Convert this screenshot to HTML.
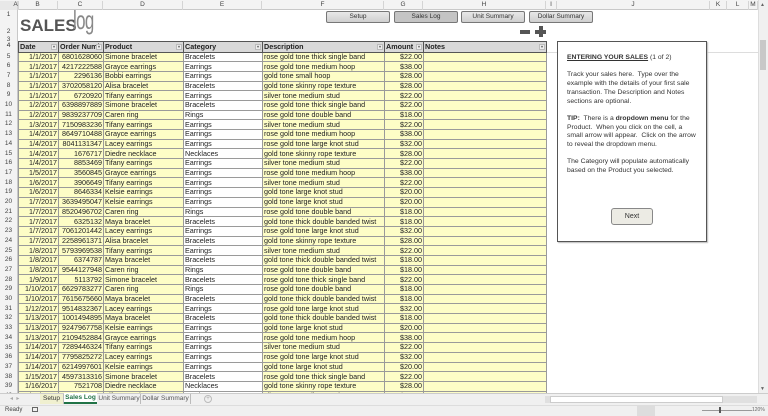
<!DOCTYPE html>
<html><head><meta charset="utf-8"><style>
*{margin:0;padding:0;box-sizing:border-box}
body{width:768px;height:416px;overflow:hidden;background:#fff;font-family:"Liberation Sans",Calibri,sans-serif;position:relative;font-size:7px;color:#222}
.abs{position:absolute}
#colhdr{left:0;top:0;width:758px;height:10px;background:#f3f3f3;border-bottom:1px solid #c8c8c8}
#colhdr span{position:absolute;top:1px;font-size:6.5px;color:#444;text-align:center;border-right:1px solid #d4d4d4;height:9px}
#rowhdr{left:0;top:10px;width:18px;height:385px;background:#f3f3f3;border-right:1px solid #c8c8c8}
#rowhdr div{position:absolute;left:0;width:17px;text-align:center;font-size:6.5px;color:#444}
table{position:absolute;left:18px;top:41px;border-collapse:collapse;table-layout:fixed}
td{height:9.7px;border:1px solid #9a9a9a;background:#fdfdc6;white-space:nowrap;overflow:hidden;padding:0 1px;font-size:7.2px;line-height:8px;color:#222}
td.r{text-align:right}
td.w{background:#fff}
tr.h td{height:10.5px;background:#d9d9d9;font-weight:bold;border:1px solid #555;position:relative}
tr.h td i{position:absolute;right:1px;top:2px;width:6px;height:6px;background:#eee;border:1px solid #bbb;font-size:4px;line-height:4px;text-align:center;font-style:normal;color:#666}
.btn{position:absolute;top:11px;height:12px;background:linear-gradient(#e8e8e8,#cfcfcf);border:1px solid #777;border-radius:2px;font-size:6.5px;text-align:center;line-height:10px;color:#333}
</style></head><body>
<div id="colhdr" class="abs">
<span style="left:0;width:18px;background:#e8e8e8"></span>
<span style="left:13px;width:6px">A</span>
<span style="left:18px;width:40px">B</span>
<span style="left:58px;width:45px">C</span>
<span style="left:103px;width:80px">D</span>
<span style="left:183px;width:79px">E</span>
<span style="left:262px;width:122px">F</span>
<span style="left:384px;width:39px">G</span>
<span style="left:423px;width:123px">H</span>
<span style="left:546px;width:11px">I</span>
<span style="left:557px;width:153px">J</span>
<span style="left:710px;width:17px">K</span>
<span style="left:727px;width:22px">L</span>
<span style="left:749px;width:9px">M</span>
</div>
<div id="rowhdr" class="abs">
<div style="top:1px">1</div><div style="top:18px">2</div><div style="top:26px">3</div><div style="top:32px">4</div>
</div>
<div class="abs" style="left:20px;top:16px;font-size:17px;font-weight:bold;color:#555;line-height:20px">SALES</div>
<div class="abs" style="left:73px;top:5px;font-size:26px;line-height:30px;color:#888;font-family:'Liberation Sans',sans-serif;transform:scaleX(0.65);transform-origin:left;letter-spacing:-1px">log</div>

<div class="btn" style="left:326px;width:64px">Setup</div>
<div class="btn" style="left:394px;width:64px;background:#c4c4c4">Sales Log</div>
<div class="btn" style="left:461px;width:64px">Unit Summary</div>
<div class="btn" style="left:529px;width:64px">Dollar Summary</div>
<div class="abs" style="left:520px;top:30px;width:10px;height:4px;background:#555"></div>
<div class="abs" style="left:535px;top:30px;width:11px;height:3.5px;background:#555"></div>
<div class="abs" style="left:538.5px;top:26px;width:4px;height:11px;background:#555"></div>

<div class="abs" style="left:546px;top:52px;width:212px;border-top:1px solid #ddd"></div>

<table>
<colgroup><col style="width:40px"><col style="width:45px"><col style="width:80px"><col style="width:79px"><col style="width:122px"><col style="width:39px"><col style="width:123px"></colgroup>
<tr class="h"><td>Date<i>▾</i></td><td>Order Numb<i>▾</i></td><td>Product<i>▾</i></td><td>Category<i>▾</i></td><td>Description<i>▾</i></td><td>Amount<i>▾</i></td><td>Notes<i>▾</i></td></tr>
<tr><td class="r">1/1/2017</td><td class="r">6801628060</td><td>Simone bracelet</td><td class="w">Bracelets</td><td>rose gold tone thick single band</td><td class="r">$22.00</td><td></td></tr>
<tr><td class="r">1/1/2017</td><td class="r">4217222588</td><td>Grayce earrings</td><td class="w">Earrings</td><td>rose gold tone medium hoop</td><td class="r">$38.00</td><td></td></tr>
<tr><td class="r">1/1/2017</td><td class="r">2296136</td><td>Bobbi earrings</td><td class="w">Earrings</td><td>gold tone small hoop</td><td class="r">$28.00</td><td></td></tr>
<tr><td class="r">1/1/2017</td><td class="r">3702058120</td><td>Alisa bracelet</td><td class="w">Bracelets</td><td>gold tone skinny rope texture</td><td class="r">$28.00</td><td></td></tr>
<tr><td class="r">1/1/2017</td><td class="r">6720920</td><td>Tifany earrings</td><td class="w">Earrings</td><td>silver tone medium stud</td><td class="r">$22.00</td><td></td></tr>
<tr><td class="r">1/2/2017</td><td class="r">6398897889</td><td>Simone bracelet</td><td class="w">Bracelets</td><td>rose gold tone thick single band</td><td class="r">$22.00</td><td></td></tr>
<tr><td class="r">1/2/2017</td><td class="r">9839237709</td><td>Caren ring</td><td class="w">Rings</td><td>rose gold tone double band</td><td class="r">$18.00</td><td></td></tr>
<tr><td class="r">1/3/2017</td><td class="r">7150983236</td><td>Tifany earrings</td><td class="w">Earrings</td><td>silver tone medium stud</td><td class="r">$22.00</td><td></td></tr>
<tr><td class="r">1/4/2017</td><td class="r">8649710488</td><td>Grayce earrings</td><td class="w">Earrings</td><td>rose gold tone medium hoop</td><td class="r">$38.00</td><td></td></tr>
<tr><td class="r">1/4/2017</td><td class="r">8041131347</td><td>Lacey earrings</td><td class="w">Earrings</td><td>rose gold tone large knot stud</td><td class="r">$32.00</td><td></td></tr>
<tr><td class="r">1/4/2017</td><td class="r">1676717</td><td>Diedre necklace</td><td class="w">Necklaces</td><td>gold tone skinny rope texture</td><td class="r">$28.00</td><td></td></tr>
<tr><td class="r">1/4/2017</td><td class="r">8853469</td><td>Tifany earrings</td><td class="w">Earrings</td><td>silver tone medium stud</td><td class="r">$22.00</td><td></td></tr>
<tr><td class="r">1/5/2017</td><td class="r">3560845</td><td>Grayce earrings</td><td class="w">Earrings</td><td>rose gold tone medium hoop</td><td class="r">$38.00</td><td></td></tr>
<tr><td class="r">1/6/2017</td><td class="r">3906649</td><td>Tifany earrings</td><td class="w">Earrings</td><td>silver tone medium stud</td><td class="r">$22.00</td><td></td></tr>
<tr><td class="r">1/6/2017</td><td class="r">8646334</td><td>Kelsie earrings</td><td class="w">Earrings</td><td>gold tone large knot stud</td><td class="r">$20.00</td><td></td></tr>
<tr><td class="r">1/7/2017</td><td class="r">3639495047</td><td>Kelsie earrings</td><td class="w">Earrings</td><td>gold tone large knot stud</td><td class="r">$20.00</td><td></td></tr>
<tr><td class="r">1/7/2017</td><td class="r">8520496702</td><td>Caren ring</td><td class="w">Rings</td><td>rose gold tone double band</td><td class="r">$18.00</td><td></td></tr>
<tr><td class="r">1/7/2017</td><td class="r">6325132</td><td>Maya bracelet</td><td class="w">Bracelets</td><td>gold tone thick double banded twist</td><td class="r">$18.00</td><td></td></tr>
<tr><td class="r">1/7/2017</td><td class="r">7061201442</td><td>Lacey earrings</td><td class="w">Earrings</td><td>rose gold tone large knot stud</td><td class="r">$32.00</td><td></td></tr>
<tr><td class="r">1/7/2017</td><td class="r">2258961371</td><td>Alisa bracelet</td><td class="w">Bracelets</td><td>gold tone skinny rope texture</td><td class="r">$28.00</td><td></td></tr>
<tr><td class="r">1/8/2017</td><td class="r">5793969538</td><td>Tifany earrings</td><td class="w">Earrings</td><td>silver tone medium stud</td><td class="r">$22.00</td><td></td></tr>
<tr><td class="r">1/8/2017</td><td class="r">6374787</td><td>Maya bracelet</td><td class="w">Bracelets</td><td>gold tone thick double banded twist</td><td class="r">$18.00</td><td></td></tr>
<tr><td class="r">1/8/2017</td><td class="r">9544127948</td><td>Caren ring</td><td class="w">Rings</td><td>rose gold tone double band</td><td class="r">$18.00</td><td></td></tr>
<tr><td class="r">1/9/2017</td><td class="r">5113792</td><td>Simone bracelet</td><td class="w">Bracelets</td><td>rose gold tone thick single band</td><td class="r">$22.00</td><td></td></tr>
<tr><td class="r">1/10/2017</td><td class="r">6629783277</td><td>Caren ring</td><td class="w">Rings</td><td>rose gold tone double band</td><td class="r">$18.00</td><td></td></tr>
<tr><td class="r">1/10/2017</td><td class="r">7615675660</td><td>Maya bracelet</td><td class="w">Bracelets</td><td>gold tone thick double banded twist</td><td class="r">$18.00</td><td></td></tr>
<tr><td class="r">1/12/2017</td><td class="r">9514832367</td><td>Lacey earrings</td><td class="w">Earrings</td><td>rose gold tone large knot stud</td><td class="r">$32.00</td><td></td></tr>
<tr><td class="r">1/13/2017</td><td class="r">1001494895</td><td>Maya bracelet</td><td class="w">Bracelets</td><td>gold tone thick double banded twist</td><td class="r">$18.00</td><td></td></tr>
<tr><td class="r">1/13/2017</td><td class="r">9247967758</td><td>Kelsie earrings</td><td class="w">Earrings</td><td>gold tone large knot stud</td><td class="r">$20.00</td><td></td></tr>
<tr><td class="r">1/13/2017</td><td class="r">2109452884</td><td>Grayce earrings</td><td class="w">Earrings</td><td>rose gold tone medium hoop</td><td class="r">$38.00</td><td></td></tr>
<tr><td class="r">1/14/2017</td><td class="r">7289446324</td><td>Tifany earrings</td><td class="w">Earrings</td><td>silver tone medium stud</td><td class="r">$22.00</td><td></td></tr>
<tr><td class="r">1/14/2017</td><td class="r">7795825272</td><td>Lacey earrings</td><td class="w">Earrings</td><td>rose gold tone large knot stud</td><td class="r">$32.00</td><td></td></tr>
<tr><td class="r">1/14/2017</td><td class="r">6214997601</td><td>Kelsie earrings</td><td class="w">Earrings</td><td>gold tone large knot stud</td><td class="r">$20.00</td><td></td></tr>
<tr><td class="r">1/15/2017</td><td class="r">4597313316</td><td>Simone bracelet</td><td class="w">Bracelets</td><td>rose gold tone thick single band</td><td class="r">$22.00</td><td></td></tr>
<tr><td class="r">1/16/2017</td><td class="r">7521708</td><td>Diedre necklace</td><td class="w">Necklaces</td><td>gold tone skinny rope texture</td><td class="r">$28.00</td><td></td></tr>
<tr><td class="r">1/17/2017</td><td class="r">8776384</td><td>Tifany earrings</td><td class="w">Earrings</td><td>silver tone medium stud</td><td class="r">$22.00</td><td></td></tr>
</table>

<div id="rownums" class="abs" style="left:0;top:41px;width:17px;font-size:6.5px;color:#444;text-align:center;line-height:9.7px">
<div style="height:10.5px;line-height:10.5px">4</div>
<div>5</div><div>6</div><div>7</div><div>8</div><div>9</div><div>10</div><div>11</div><div>12</div><div>13</div><div>14</div><div>15</div><div>16</div><div>17</div><div>18</div><div>19</div><div>20</div><div>21</div><div>22</div><div>23</div><div>24</div><div>25</div><div>26</div><div>27</div><div>28</div><div>29</div><div>30</div><div>31</div><div>32</div><div>33</div><div>34</div><div>35</div><div>36</div><div>37</div><div>38</div><div>39</div><div>40</div>
</div>

<div class="abs" style="left:557px;top:41px;width:150px;height:201px;border:1px solid #555;background:#fff;box-shadow:1px 1px 1px #bbb;padding:12px 9px 0 9px;font-size:6.8px;line-height:8.7px;color:#333">
<div><b style="text-decoration:underline">ENTERING YOUR SALES</b> (1 of 2)</div>
<div style="margin-top:8.7px">Track your sales here.&nbsp; Type over the example with the details of your first sale transaction. The Description and Notes sections are optional.</div>
<div style="margin-top:8.7px"><b>TIP:</b>&nbsp; There is a <b>dropdown menu</b> for the Product.&nbsp; When you click on the cell, a small arrow will appear.&nbsp; Click on the arrow to reveal the dropdown menu.</div>
<div style="margin-top:8.7px">The Category will populate automatically based on the Product you selected.</div>
</div>
<div class="abs" style="left:611px;top:208px;width:42px;height:17px;background:#ecebe4;border:1px solid #888;border-radius:3px;text-align:center;line-height:15px;font-size:7px;color:#333">Next</div>

<div class="abs" style="left:758px;top:0;width:10px;height:395px;background:#f0f0f0;border-left:1px solid #ddd"></div>
<div class="abs" style="left:760px;top:2px;width:6px;height:6px;font-size:5px;color:#666">▲</div>
<div class="abs" style="left:760px;top:40px;width:6px;height:30px;background:#c8c8c8"></div>
<div class="abs" style="left:760px;top:386px;width:6px;height:6px;font-size:5px;color:#666">▼</div>

<div class="abs" style="left:0;top:393px;width:768px;height:12px;background:#f0f0f0;border-top:1px solid #ccc"></div>
<div class="abs" style="left:10px;top:395px;font-size:6px;color:#aaa">◂ &nbsp;▸</div>
<div class="abs" style="left:40px;top:394px;width:24px;height:10px;background:#f0f0d0;font-size:6.5px;text-align:center;line-height:10px;color:#333;border-right:1px solid #bbb">Setup</div>
<div class="abs" style="left:64px;top:393px;width:33px;height:11px;background:#fff;font-size:6.5px;text-align:center;line-height:10px;color:#217346;font-weight:bold;border-bottom:2px solid #217346">Sales Log</div>
<div class="abs" style="left:98px;top:394px;width:43px;height:10px;font-size:6.5px;text-align:center;line-height:10px;color:#555;border-right:1px solid #bbb">Unit Summary</div>
<div class="abs" style="left:141px;top:394px;width:50px;height:10px;font-size:6.5px;text-align:center;line-height:10px;color:#555;border-right:1px solid #bbb">Dollar Summary</div>
<div class="abs" style="left:204px;top:395px;width:8px;height:8px;border:1px solid #bbb;border-radius:50%;font-size:6px;line-height:6px;text-align:center;color:#aaa">+</div>
<div class="abs" style="left:545px;top:396px;width:212px;height:7px;background:#e0e0e0"></div>
<div class="abs" style="left:550px;top:396px;width:173px;height:7px;background:#fff;border:1px solid #ccc"></div>

<div class="abs" style="left:0;top:405px;width:768px;height:11px;background:#f0f0f0;border-top:1px solid #ddd"></div>
<div class="abs" style="left:5px;top:407px;font-size:6px;color:#444">Ready</div>
<div class="abs" style="left:32px;top:407px;width:6px;height:5px;border:1px solid #666"></div>
<div class="abs" style="left:637px;top:405px;width:18px;height:11px;background:#ddd"></div>
<div class="abs" style="left:702px;top:410px;width:50px;border-top:1px solid #999"></div>
<div class="abs" style="left:719px;top:407px;width:2px;height:6px;background:#555"></div>
<div class="abs" style="left:752px;top:407px;font-size:5px;color:#666">120%</div>
</body></html>
